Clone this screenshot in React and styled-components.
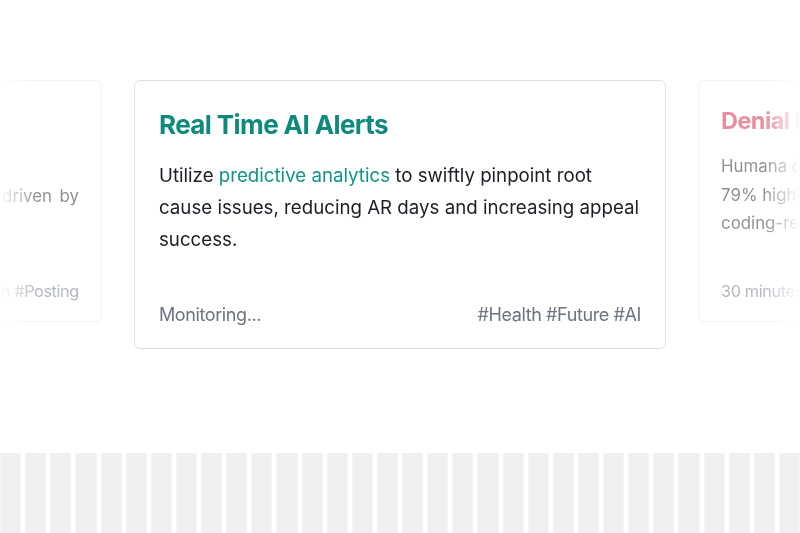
import React from 'react';
import styled, {createGlobalStyle} from "styled-components";

const GlobalStyle = createGlobalStyle`
    * {
        box-sizing: border-box;
    }
    body {
        margin: 0;
        background: #ffffff;
        font-family: Inter, "Noto Sans", sans-serif;
    }
`

const Page = styled.main`
    width: 800px;
    height: 533px;
    overflow: hidden;
    padding-top: 80px;
    display: flex;
    flex-direction: column;
    gap: 104px;
`

const Carousel = styled.section`
    flex: none;
    display: flex;
    justify-content: center;
    align-items: stretch;
    gap: 6px;
    width: 800px;
    overflow: hidden;
    -webkit-mask-image: linear-gradient(to right, transparent 0, #000 36px, #000 764px, transparent 800px);
    mask-image: linear-gradient(to right, transparent 0, #000 36px, #000 764px, transparent 800px);
`

const Card = styled.article`
    flex: 0 0 532px;
    height: 269px;
    display: flex;
    flex-direction: column;
    padding: 27px 24px 19px;
    background: #ffffff;
    border: 1px solid #dedfe2;
    border-radius: 6px;
    transform: ${p => p.$side ? 'scale(0.9)' : 'none'};
    transform-origin: top center;
    opacity: ${p => p.$side ? 0.5 : 1};
`

const Title = styled.h3`
    margin: 0;
    font-size: 26px;
    line-height: 34px;
    font-weight: 700;
    letter-spacing: -0.6px;
    color: ${p => p.$color};
`

const Body = styled.p`
    margin: 18px 0 0;
    font-size: 18.7px;
    line-height: 32px;
    color: #1b1e24;
    text-align: ${p => p.$justify ? 'justify' : 'left'};
`

const Accent = styled.span`
    color: #129485;
`

const Footer = styled.footer`
    margin-top: auto;
    display: flex;
    justify-content: space-between;
    font-size: 18px;
    line-height: 28px;
    letter-spacing: -0.4px;
    color: #6b7280;
`

const Bars = styled.div`
    flex: none;
    display: grid;
    grid-template-columns: repeat(32, 1fr);
    gap: 4px;
    height: 100px;
`

const Bar = styled.div`
    background: #eff0f2;
    box-shadow: inset 1px 0 0 #f3f4f5, inset -1px 0 0 #f3f4f5;
`

const cards = [
    {
        id: 'posting',
        title: <>Smart Cash Posting &amp;<br/>Reconciliation</>,
        color: '#0e8a7d',
        body: <>Automated matching and variance insights driven by payer-specific rules.</>,
        justify: true,
        status: '2 hours ago',
        tags: '#Cash #Posting',
        side: true,
    },
    {
        id: 'alerts',
        title: 'Real Time AI Alerts',
        color: '#0e8a7d',
        body: <>Utilize <Accent>predictive analytics</Accent> to swiftly pinpoint root cause issues, reducing AR days and increasing appeal success.</>,
        status: 'Monitoring...',
        tags: '#Health #Future #AI',
    },
    {
        id: 'denials',
        title: 'Denial Risk Spike',
        color: '#d11f3f',
        body: <>Humana denials for cardiology are up<br/>79% higher than last month, mostly tied to<br/>coding-related modifier errors.</>,
        status: '30 minutes ago',
        tags: '#Denials',
        side: true,
    },
];

export default function App() {
    return (
        <Page>
            <GlobalStyle/>
            <Carousel>
                {cards.map(card => (
                    <Card key={card.id} $side={card.side}>
                        <Title $color={card.color}>{card.title}</Title>
                        <Body $justify={card.justify}>{card.body}</Body>
                        <Footer>
                            <span>{card.status}</span>
                            <span>{card.tags}</span>
                        </Footer>
                    </Card>
                ))}
            </Carousel>
            <Bars>
                {Array.from({length: 32}).map((_, i) => <Bar key={i}/>)}
            </Bars>
        </Page>
    );
}
